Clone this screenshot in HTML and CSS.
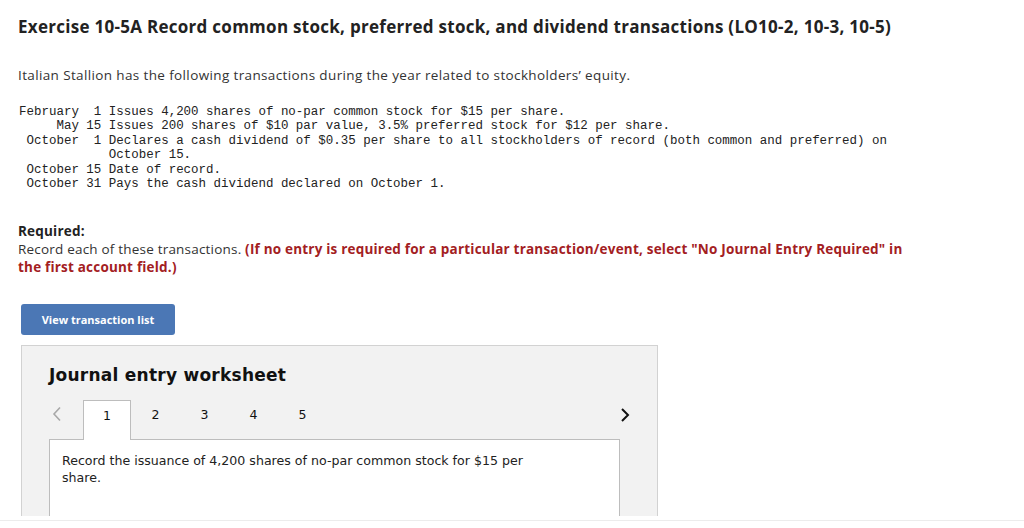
FILE: index.html
```html
<!DOCTYPE html>
<html>
<head>
<meta charset="utf-8">
<link rel="stylesheet" href="styles.css">
</head>
<body>
<div class="viewport">
  <div class="page">
    <h1 class="title">Exercise 10-5A Record common stock, preferred stock, and dividend transactions (LO10-2, 10-3, 10-5)</h1>
    <p class="intro">Italian Stallion has the following transactions during the year related to stockholders’ equity.</p>
<pre class="txns">February  1 Issues 4,200 shares of no-par common stock for $15 per share.
     May 15 Issues 200 shares of $10 par value, 3.5% preferred stock for $12 per share.
 October  1 Declares a cash dividend of $0.35 per share to all stockholders of record (both common and preferred) on
            October 15.
 October 15 Date of record.
 October 31 Pays the cash dividend declared on October 1.</pre>
    <div class="required">
      <div class="req-label">Required:</div>
      <p class="req-text">Record each of these transactions. <strong class="req-note">(If no entry is required for a particular transaction/event, select "No Journal Entry Required" in the first account field.)</strong></p>
    </div>
    <button class="btn-list">View transaction list</button>
    <div class="worksheet">
      <h2 class="ws-title">Journal entry worksheet</h2>
      <div class="tabs">
        <div class="tab-group">
          <span class="arrow prev">
            <svg width="10" height="16" viewBox="0 0 10 16"><path d="M8 1.5 L2 8 L8 14.5" fill="none" stroke="#a8a8a8" stroke-width="1.6"/></svg>
          </span>
          <span class="tab active">1</span>
          <span class="tab">2</span>
          <span class="tab">3</span>
          <span class="tab">4</span>
          <span class="tab">5</span>
        </div>
        <span class="arrow next">
          <svg width="10" height="16" viewBox="0 0 10 16"><path d="M2 2 L8 8 L2 14" fill="none" stroke="#111" stroke-width="2"/></svg>
        </span>
      </div>
      <div class="ws-content">
        <p class="ws-text">Record the issuance of 4,200 shares of no-par common stock for $15 per share.</p>
      </div>
    </div>
  </div>
</div>
<div class="footer-line"></div>
</body>
</html>
```
FILE: styles.css
```css
html, body {
  margin: 0;
  padding: 0;
  background: #fff;
}
body {
  width: 1024px;
  height: 528px;
  overflow: hidden;
  font-family: "Open Sans", "Liberation Sans", sans-serif;
  color: #2b2b2b;
}
.viewport {
  height: 516px;
  overflow: hidden;
}
.page {
  padding: 17px 0 0 18px;
}
.title {
  margin: 0;
  font-size: 17px;
  line-height: 20px;
  font-weight: 700;
  color: #222;
  letter-spacing: 0.28px;
}
.intro {
  margin: 29px 0 0 0;
  font-size: 13.5px;
  line-height: 18px;
  color: #333;
  letter-spacing: 0.37px;
}
.txns {
  margin: 21px 0 0 1px;
  font-family: "Liberation Mono", "Courier New", monospace;
  font-size: 12.48px;
  line-height: 14.4px;
  color: #222;
}
.required {
  margin-top: 31px;
  width: 900px;
  font-size: 13.5px;
  line-height: 18px;
  color: #333;
  letter-spacing: 0.2px;
}
.req-label {
  font-weight: 700;
  color: #222;
}
.req-text {
  margin: 0;
}
.req-note {
  font-weight: 700;
  color: #a3201f;
}
.btn-list {
  display: block;
  margin: 28px 0 0 3px;
  width: 154px;
  height: 31px;
  border: none;
  border-radius: 3px;
  background: #4b77b5;
  color: #fff;
  font-family: "Open Sans", "Liberation Sans", sans-serif;
  font-weight: 700;
  font-size: 11px;
  padding: 0;
}
.worksheet {
  margin: 10px 0 0 3px;
  width: 637px;
  height: 220px;
  background: #f2f2f2;
  border: 1px solid #d2d2d2;
  padding: 19px 37px 0 27px;
  box-sizing: border-box;
}
.ws-title {
  margin: 0;
  font-family: "DejaVu Sans", Verdana, sans-serif;
  font-size: 17px;
  line-height: 20px;
  font-weight: 700;
  color: #111;
  letter-spacing: 0.25px;
}
.tabs {
  margin-top: 15px;
  display: flex;
  justify-content: space-between;
  align-items: flex-end;
  margin-right: -10px;
  height: 39px;
}
.tab-group {
  display: flex;
  align-items: flex-end;
  height: 39px;
}
.arrow {
  display: flex;
  align-items: center;
  height: 27px;
  align-self: flex-start;
  padding-top: 1px;
}
.prev {
  width: 34px;
  padding-left: 3px;
  box-sizing: border-box;
}
.next {
  width: 10px;
}
.tab {
  width: 49px;
  height: 38px;
  box-sizing: border-box;
  padding-top: 6px;
  text-align: center;
  font-family: "DejaVu Sans", Verdana, sans-serif;
  font-size: 12.5px;
  line-height: 16px;
  color: #111;
}
.tab.active {
  width: 48px;
  height: 40px;
  background: #fff;
  border: 1px solid #bdbdbd;
  border-bottom: none;
  padding-top: 7px;
  margin-bottom: -1px;
  position: relative;
  z-index: 1;
}
.ws-content {
  background: #fff;
  border: 1px solid #bdbdbd;
  height: 120px;
  padding: 12px 12px 0 12px;
}
.ws-text {
  margin: 0;
  width: 480px;
  font-family: "DejaVu Sans", Verdana, sans-serif;
  font-size: 12.6px;
  line-height: 17px;
  color: #222;
}
.footer-line {
  margin-top: 4px;
  border-top: 1px solid #ececec;
}
```
